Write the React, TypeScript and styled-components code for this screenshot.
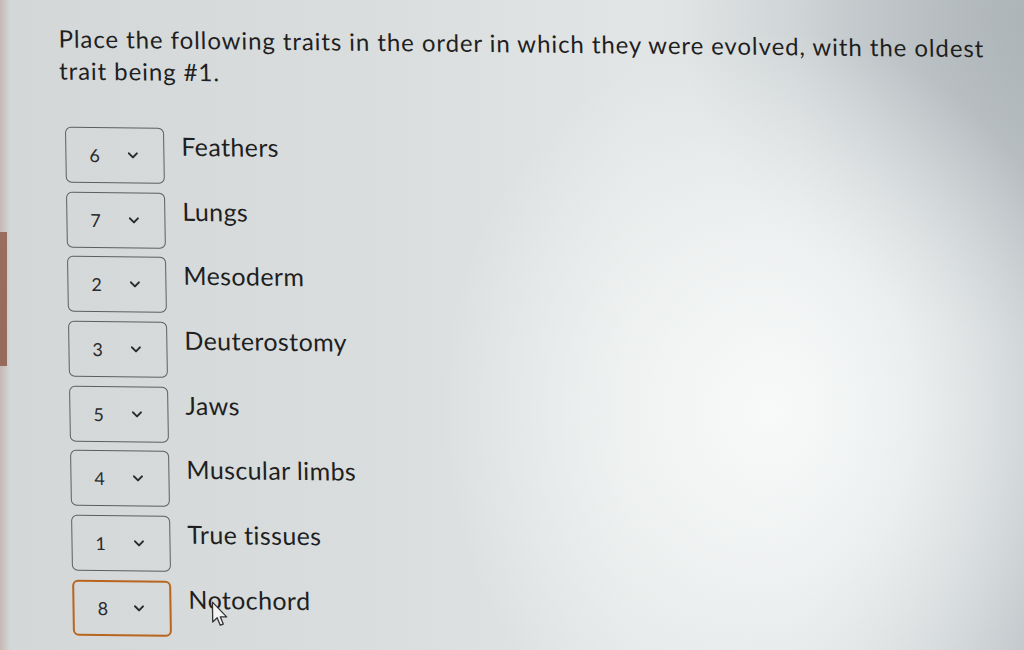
import React from "react";
import styled, { createGlobalStyle } from "styled-components";

const GlobalStyle = createGlobalStyle`
  html, body {
    margin: 0;
    padding: 0;
    width: 1024px;
    height: 650px;
    overflow: hidden;
  }
  body {
    font-family: Lato, "Open Sans", "Liberation Sans", sans-serif;
    color: #222;
    background-color: #dde1e1;
    background-image:
      linear-gradient(#9a6e5e, #976b5b),
      linear-gradient(90deg, rgba(196,180,174,0.9), rgba(196,180,174,0) 100%),
      radial-gradient(ellipse 330px 380px at 770px 410px, rgba(248,250,250,1) 0%, rgba(244,246,246,0.75) 45%, rgba(240,243,243,0) 100%),
      radial-gradient(ellipse 380px 320px at 1060px 20px, rgba(165,173,177,0.8), rgba(165,173,177,0) 100%),
      linear-gradient(90deg, #d3d7d8 0%, #d9dddd 35%, #e2e5e5 62%, #dde1e2 78%, #c3c9cc 100%);
    background-repeat: no-repeat;
    background-size: 7px 134px, 10px 650px, 100% 100%, 100% 100%, 100% 100%;
    background-position: 0 232px, 0 0, 0 0, 0 0, 0 0;
  }
`;

const Page = styled.main`
  position: relative;
  width: 1024px;
  height: 650px;
  box-sizing: border-box;
  padding: 22px 0 0 58px;
  transform-origin: 0 0;
  transform: skew(0.9deg, 0.6deg);
`;

const Prompt = styled.p`
  margin: 0;
  width: 980px;
  font-size: 24px;
  line-height: 32px;
  color: #1f1f1f;
  letter-spacing: 0.92px;
  white-space: nowrap;
`;

const PromptLine = styled.span`
  display: block;
`;

const List = styled.ol`
  list-style: none;
  margin: 40px 0 0 5px;
  padding: 0;
  display: flex;
  flex-direction: column;
  gap: 8.7px;
`;

const Row = styled.li`
  display: flex;
  align-items: flex-start;
  gap: 17px;
`;

const Select = styled.div<{ $active?: boolean }>`
  box-sizing: border-box;
  width: 99px;
  height: 56px;
  border: ${(p) => (p.$active ? "2px solid #b8661f" : "1.5px solid #5e5e5e")};
  border-radius: 6px;
  display: flex;
  align-items: center;
  justify-content: space-between;
  padding: 0 25px 0 23px;
  font-size: 18px;
  color: #2a2a2a;
`;

const Chevron = styled.svg`
  width: 11px;
  height: 8px;
  display: block;
`;

const Label = styled.span`
  font-size: 25px;
  line-height: 30px;
  margin-top: 3px;
  letter-spacing: 0.4px;
  color: #1f1f1f;
`;

const Pointer = styled.svg`
  position: absolute;
  left: 201px;
  top: 599px;
  width: 20px;
  height: 28px;
`;

const traits: { rank: number; name: string }[] = [
  { rank: 6, name: "Feathers" },
  { rank: 7, name: "Lungs" },
  { rank: 2, name: "Mesoderm" },
  { rank: 3, name: "Deuterostomy" },
  { rank: 5, name: "Jaws" },
  { rank: 4, name: "Muscular limbs" },
  { rank: 1, name: "True tissues" },
  { rank: 8, name: "Notochord" },
];

export default function App() {
  return (
    <>
      <GlobalStyle />
      <Page>
        <Prompt>
          <PromptLine>Place the following traits in the order in which they were evolved, with the oldest</PromptLine>
          <PromptLine>trait being #1.</PromptLine>
        </Prompt>
        <List>
          {traits.map((t, i) => (
            <Row key={t.name}>
              <Select $active={i === traits.length - 1}>
                <span>{t.rank}</span>
                <Chevron viewBox="0 0 11 8">
                  <path d="M1.5 2 L5.5 6 L9.5 2" fill="none" stroke="#2a2a2a" strokeWidth="2" strokeLinecap="round" strokeLinejoin="round" />
                </Chevron>
              </Select>
              <Label>{t.name}</Label>
            </Row>
          ))}
        </List>
        <Pointer viewBox="0 0 20 28">
          <path
            d="M2 1 L2 21 L6.5 16.5 L9.5 24 L12.5 22.8 L9.6 15.6 L16 15.6 Z"
            fill="#f4f4f4"
            stroke="#333"
            strokeWidth="1.3"
            strokeLinejoin="round"
          />
        </Pointer>
      </Page>
    </>
  );
}
